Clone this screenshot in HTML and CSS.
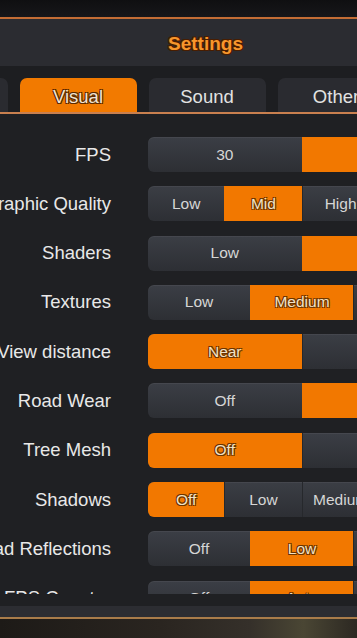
FILE: index.html
```html
<!DOCTYPE html>
<html>
<head>
<meta charset="utf-8">
<link rel="stylesheet" href="styles.css">
</head>
<body>
<div class="top-gap"></div>
<div class="panel">
  <div class="header"><span class="title">Settings</span></div>
  <div class="tabs">
    <div class="tab">General</div>
    <div class="tab active">Visual</div>
    <div class="tab">Sound</div>
    <div class="tab">Other</div>
    <div class="tab">Controls</div>
  </div>
  <div class="content">
    <div class="scroll">
      <div class="rows">
        <div class="label">FPS</div>
        <div class="seg"><div class="opt">30</div><div class="opt on">60</div></div>

        <div class="label">Graphic Quality</div>
        <div class="seg"><div class="opt">Low</div><div class="opt on">Mid</div><div class="opt">High</div><div class="opt">Ultra</div></div>

        <div class="label">Shaders</div>
        <div class="seg"><div class="opt">Low</div><div class="opt on">High</div></div>

        <div class="label">Textures</div>
        <div class="seg"><div class="opt">Low</div><div class="opt on">Medium</div><div class="opt">High</div></div>

        <div class="label">View distance</div>
        <div class="seg"><div class="opt on">Near</div><div class="opt">Far</div></div>

        <div class="label">Road Wear</div>
        <div class="seg"><div class="opt">Off</div><div class="opt on">On</div></div>

        <div class="label">Tree Mesh</div>
        <div class="seg"><div class="opt on">Off</div><div class="opt">On</div></div>

        <div class="label">Shadows</div>
        <div class="seg"><div class="opt on">Off</div><div class="opt">Low</div><div class="opt">Medium</div><div class="opt">High</div></div>

        <div class="label">Road Reflections</div>
        <div class="seg"><div class="opt">Off</div><div class="opt on">Low</div><div class="opt">High</div></div>

        <div class="label">FPS Counter</div>
        <div class="seg"><div class="opt">Off</div><div class="opt on">Auto</div><div class="opt">On</div></div>
      </div>
    </div>
  </div>
  <div class="footer"></div>
</div>
<div class="backdrop"></div>
</body>
</html>
```
FILE: styles.css
```css
html, body {
  margin: 0;
  padding: 0;
}
body {
  width: 357px;
  height: 638px;
  overflow: hidden;
  background: #131315;
  font-family: "Liberation Sans", Arial, sans-serif;
}
.top-gap {
  height: 17px;
  background: linear-gradient(#0f0f11, #17171a);
}
.panel {
  width: 660px;
  margin-left: -123px;
  border-top: 2px solid #c46d35;
}
.header {
  height: 47px;
  background: #2b2c31;
  display: flex;
  align-items: center;
  justify-content: center;
}
.title {
  font-weight: bold;
  font-size: 19px;
  color: #f7962c;
  margin-left: -3px;
  margin-top: 2px;
  text-shadow: 0 0 1px #4a1e00, 1px 1px 0 #4a1e00, -1px -1px 0 #4a1e00, 1px -1px 0 #4a1e00, -1px 1px 0 #4a1e00;
}
.tabs {
  height: 46px;
  background: #1d1e21;
  display: flex;
  justify-content: center;
  align-items: flex-end;
  gap: 12px;
  border-bottom: 2px solid #c9804f;
}
.tab {
  width: 117px;
  height: 34px;
  box-sizing: border-box;
  padding-top: 3px;
  background: #2a2b30;
  border-radius: 7px 7px 0 0;
  display: flex;
  align-items: center;
  justify-content: center;
  font-size: 18.5px;
  color: #e2e2e2;
}
.tab.active {
  background: #f27a00;
  color: #f3e4d2;
  text-shadow: 1px 1px 0 #5a2a00, -1px -1px 0 #5a2a00, 1px -1px 0 #5a2a00, -1px 1px 0 #5a2a00;
}
.content {
  background: #1f2023;
  padding-bottom: 12px;
}
.scroll {
  height: 480px;
  overflow: hidden;
  box-sizing: border-box;
  padding-top: 23px;
}
.rows {
  display: grid;
  grid-template-columns: 234px 308px;
  column-gap: 37px;
  grid-auto-rows: 35px;
  row-gap: 14.3px;
  align-items: center;
}
.label {
  text-align: right;
  font-size: 18.5px;
  color: #e8e8e8;
  white-space: nowrap;
}
.seg {
  display: flex;
  height: 35px;
  border-radius: 6px;
  overflow: hidden;
  background: linear-gradient(#3b3e45, #2d2f34);
  box-shadow: inset 0 1px 0 rgba(255, 255, 255, 0.05);
}
.opt {
  flex: 1;
  display: flex;
  align-items: center;
  justify-content: center;
  font-size: 15.5px;
  color: #d6d6d6;
  border-left: 1px solid #26282c;
}
.opt:first-child {
  border-left: none;
}
.opt.on {
  background: #f27800;
  border-left-color: #f27800;
  color: #f2e2c6;
  text-shadow: 1px 1px 0 #6a3300, -1px -1px 0 #6a3300, 1px -1px 0 #6a3300, -1px 1px 0 #6a3300;
}
.footer {
  height: 11px;
  background: #2c2d32;
  border-bottom: 2px solid #a97c4a;
}
.backdrop {
  height: 30px;
  background: linear-gradient(90deg, #1d1a17 0%, #2a2520 45%, #35302a 70%, #4a4634 85%, #2c2822 100%);
}
```
